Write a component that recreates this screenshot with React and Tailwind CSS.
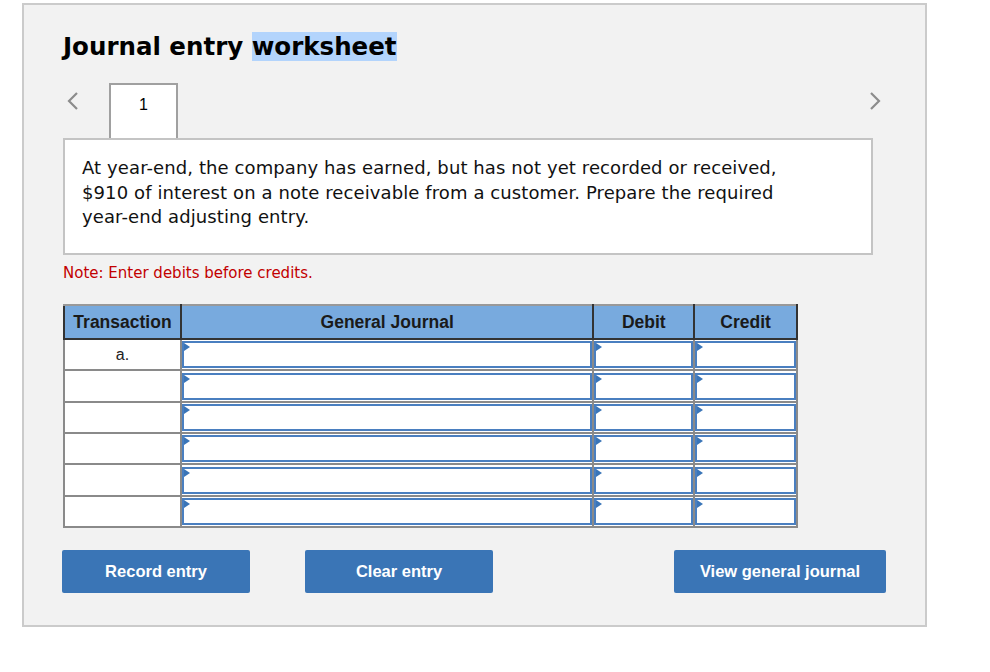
import React from "react";

const rows = ["a.", "", "", "", "", ""];

function EntryCell({ width }) {
  return (
    <td className="border-2 border-[#8a8a8a] p-0 bg-white" style={{ width }}>
      <div className="relative h-[27px] border-2 border-[#4a7fc0] bg-white">
        <span className="absolute left-0 top-0 w-0 h-0 border-t-[4px] border-b-[4px] border-l-[6px] border-t-transparent border-b-transparent border-l-[#3a75b8]" />
      </div>
    </td>
  );
}

export default function App() {
  return (
    <div className="bg-white w-[990px] h-[672px] pt-[3px] pl-[22px]">
      <div className="w-[905px] h-[624px] border-2 border-[#cbcbcb] bg-[#f2f2f2] pl-[39px] pt-[26px]" style={{ fontFamily: '"DejaVu Sans", Verdana, sans-serif' }}>
        <h1 className="text-[24.5px] leading-[32px] font-bold text-black">
          Journal entry <span className="bg-[#b3d4fc]">worksheet</span>
        </h1>

        <div className="relative flex items-end h-[55px] mt-[20px] w-[810px]">
          <svg className="absolute left-[3px] top-[8px]" width="13" height="20" viewBox="0 0 13 20">
            <polyline points="11,2 3,10 11,18" fill="none" stroke="#8c8c8c" strokeWidth="2.2" />
          </svg>
          <div className="ml-[46px] w-[69px] h-[55px] border-2 border-b-0 border-[#a0a0a0] bg-white flex justify-center pt-[8px] text-[16px]" style={{ fontFamily: '"Liberation Sans", Arial, sans-serif' }}>
            1
          </div>
          <svg className="absolute right-[-9px] top-[8px]" width="13" height="20" viewBox="0 0 13 20">
            <polyline points="2,2 10,10 2,18" fill="none" stroke="#8c8c8c" strokeWidth="2.2" />
          </svg>
        </div>

        <div className="w-[810px] h-[117px] border-2 border-[#c4c4c4] bg-white pl-[17px] pt-[16px] text-[18px] leading-[24.5px] tracking-[0.1px] text-[#111]">
          At year-end, the company has earned, but has not yet recorded or received,
          <br />
          $910 of interest on a note receivable from a customer. Prepare the required
          <br />
          year-end adjusting entry.
        </div>

        <p className="mt-[9px] text-[15px] leading-[18px] text-[#c20000]">Note: Enter debits before credits.</p>

        <table className="mt-[22px] border-collapse w-[735px] text-[17.5px]" style={{ fontFamily: '"Liberation Sans", Arial, sans-serif' }}>
          <thead>
            <tr className="h-[34px] bg-[#78aade] text-[#1a1a1a] font-bold">
              <th className="border-2 border-[#333] border-t-[#999] w-[117px] font-bold">Transaction</th>
              <th className="border-2 border-[#333] border-t-[#999] w-[414px] font-bold">General Journal</th>
              <th className="border-2 border-[#333] border-t-[#999] w-[101px] font-bold">Debit</th>
              <th className="border-2 border-[#333] border-t-[#999] w-[103px] font-bold">Credit</th>
            </tr>
          </thead>
          <tbody>
            {rows.map((r, i) => (
              <tr key={i} className={i === 1 || i === 4 ? "h-[32px]" : "h-[31px]"}>
                <td className="border-2 border-[#8a8a8a] bg-white text-center text-[16px] text-[#222]">{r}</td>
                <EntryCell width={414} />
                <EntryCell width={101} />
                <EntryCell width={103} />
              </tr>
            ))}
          </tbody>
        </table>

        <div className="flex mt-[22px] text-[16.5px] font-bold text-white" style={{ fontFamily: '"Liberation Sans", Arial, sans-serif' }}>
          <button className="w-[188px] h-[43px] bg-[#3a75b6] rounded-[2px] -ml-px">Record entry</button>
          <button className="w-[188px] h-[43px] bg-[#3a75b6] rounded-[2px] ml-[55px]">Clear entry</button>
          <button className="w-[212px] h-[43px] bg-[#3a75b6] rounded-[2px] ml-[181px]">View general journal</button>
        </div>
      </div>
    </div>
  );
}
